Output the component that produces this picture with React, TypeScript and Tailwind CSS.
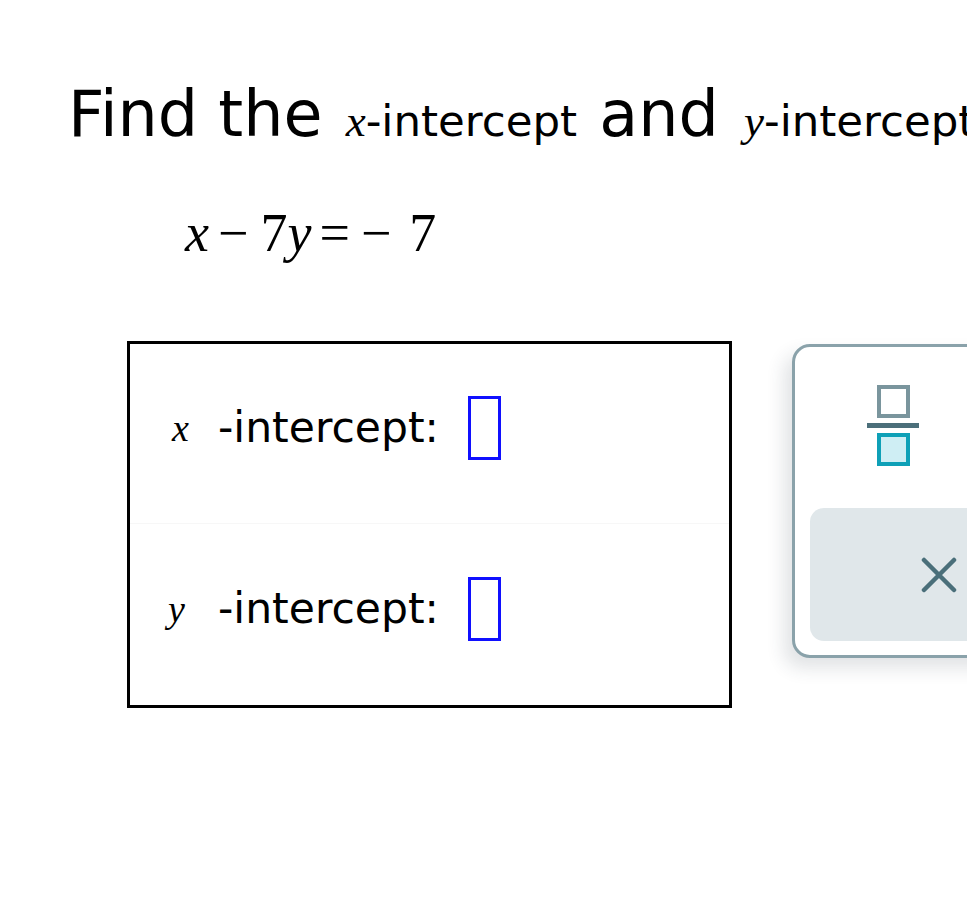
export default function App() {
  const sans = "font-['DejaVu_Sans',Verdana,sans-serif]";
  const serif = "font-['Liberation_Serif','Times_New_Roman',serif] italic";

  return (
    <div className="relative h-[924px] w-[967px] overflow-hidden bg-white text-black">
      {/* question line */}
      <div className={`${sans} ml-[68px] mt-[84px] whitespace-nowrap text-[63.5px] leading-[60px]`}>
        Find the <span className={`${serif} ml-[3px] text-[45px]`}>x</span>
        <span className="text-[43.5px]">-intercept</span>{" "}
        <span className="ml-[2px]">and</span>{" "}
        <span className={`${serif} ml-[5px] text-[45px]`}>y</span>
        <span className="text-[43.5px]">-intercept</span>
      </div>

      {/* equation */}
      <div className="ml-[185px] mt-[55px] flex whitespace-nowrap font-['Liberation_Serif','Times_New_Roman',serif] text-[54px] leading-[54px]">
        <span className="italic">x</span>
        <span className="ml-[9px]">−</span>
        <span className="ml-[12px]">7</span>
        <span className="italic">y</span>
        <span className="ml-[8px]">=</span>
        <span className="ml-[11px]">−</span>
        <span className="ml-[18px]">7</span>
      </div>

      <div className="mt-[81px] flex items-start">
        {/* answer box */}
        <div className="ml-[127px] w-[605px] shrink-0 border-[3px] border-black">
          <div className="flex items-center pb-[63px] pl-[42px] pt-[52px]">
            <span className={`${serif} w-[46px] text-[38px] leading-none`}>x</span>
            <span className={`${sans} text-[42.5px] leading-none`}>-intercept:</span>
            <span className="ml-[29px] h-[64px] w-[33px] border-[3px] border-[#1010ff]" />
          </div>
          <div className="flex items-center border-t border-[#f7f7f7] pb-[64px] pl-[38px] pt-[53px]">
            <span className={`${serif} w-[50px] text-[38px] leading-none`}>y</span>
            <span className={`${sans} text-[42.5px] leading-none`}>-intercept:</span>
            <span className="ml-[29px] h-[64px] w-[33px] border-[3px] border-[#1010ff]" />
          </div>
        </div>

        {/* keypad */}
        <div className="ml-[60px] mt-[3px] flex h-[314px] w-[220px] shrink-0 flex-col rounded-[18px] border-[3px] border-[#8aa2aa] bg-white shadow-[-8px_10px_18px_rgba(40,60,70,0.14)]">
          <svg
            width="52"
            height="82"
            viewBox="0 0 52 82"
            className="ml-[72px] mt-[38px]"
          >
            <rect x="12" y="2" width="29" height="29" fill="#fff" stroke="#7a959d" strokeWidth="4" />
            <rect x="0" y="38" width="52" height="5" fill="#4b6f7a" />
            <rect x="12" y="50" width="29" height="29" fill="#cfeef4" stroke="#0ea0b7" strokeWidth="4" />
          </svg>
          <div className="ml-[15px] mt-[41px] h-[133px] w-[200px] rounded-[14px] bg-[#e0e7ea]">
            <svg
              width="36"
              height="36"
              viewBox="0 0 36 36"
              className="ml-[111px] mt-[49px]"
            >
              <path
                d="M3 3 L33 33 M33 3 L3 33"
                stroke="#4a6f7a"
                strokeWidth="4.5"
                strokeLinecap="round"
                fill="none"
              />
            </svg>
          </div>
        </div>
      </div>
    </div>
  );
}
